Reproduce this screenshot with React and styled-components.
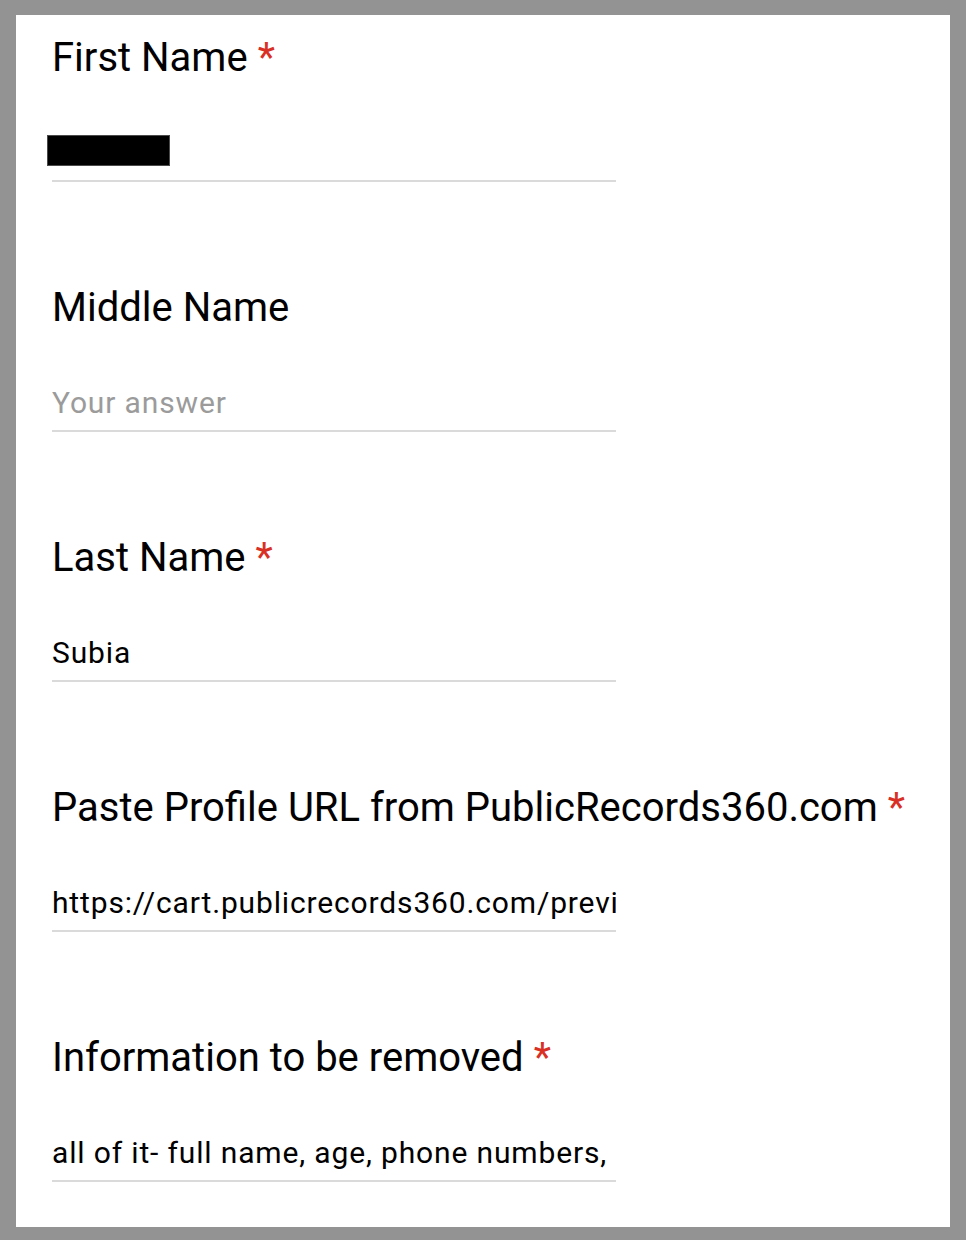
import React from "react";
import styled, { createGlobalStyle } from "styled-components";

const Global = createGlobalStyle`
  html, body { margin: 0; padding: 0; background: #ffffff; }
  * { box-sizing: border-box; }
`;

const Frame = styled.div`
  width: 966px;
  height: 1240px;
  border-style: solid;
  border-color: #939393;
  border-width: 15px 16px 13px 16px;
  background: #ffffff;
  padding: 19px 0 0 36px;
  font-family: Roboto, "Liberation Sans", Arial, sans-serif;
  display: flex;
  flex-direction: column;
  gap: 102px;
`;

const Question = styled.div`
  display: flex;
  flex-direction: column;
`;

const Label = styled.div`
  font-size: 40px;
  line-height: 48px;
  color: #000000;
  white-space: nowrap;
`;

const Required = styled.span`
  color: #d93025;
  margin-left: 10px;
`;

const Field = styled.div`
  margin-top: 52px;
  width: 564px;
  height: 48px;
  padding: 1px 0 8px 0;
  border-bottom: 2px solid #dadada;
  font-size: 30px;
  line-height: 36px;
  letter-spacing: 0.85px;
  color: ${(p) => (p.$placeholder ? "#9b9b9b" : "#000000")};
  white-space: nowrap;
  overflow: ${(p) => (p.$redacted ? "visible" : "hidden")};
`;

const Redacted = styled.div`
  width: 123px;
  height: 31px;
  margin-left: -5px;
  background: #000000;
  border: 1px solid #4a4a4a;
`;

const questions = [
  { label: "First Name", required: true, redacted: true },
  { label: "Middle Name", required: false, value: "Your answer", placeholder: true },
  { label: "Last Name", required: true, value: "Subia" },
  {
    label: "Paste Profile URL from PublicRecords360.com",
    required: true,
    value: "https://cart.publicrecords360.com/preview/person-report",
  },
  {
    label: "Information to be removed",
    required: true,
    value: "all of it- full name, age, phone numbers, addresses, relatives",
  },
];

export default function App() {
  return (
    <>
      <Global />
      <Frame>
        {questions.map((q) => (
          <Question key={q.label}>
            <Label>
              {q.label}
              {q.required && <Required>*</Required>}
            </Label>
            <Field $placeholder={q.placeholder} $redacted={q.redacted}>
              {q.redacted ? <Redacted /> : q.value}
            </Field>
          </Question>
        ))}
      </Frame>
    </>
  );
}
